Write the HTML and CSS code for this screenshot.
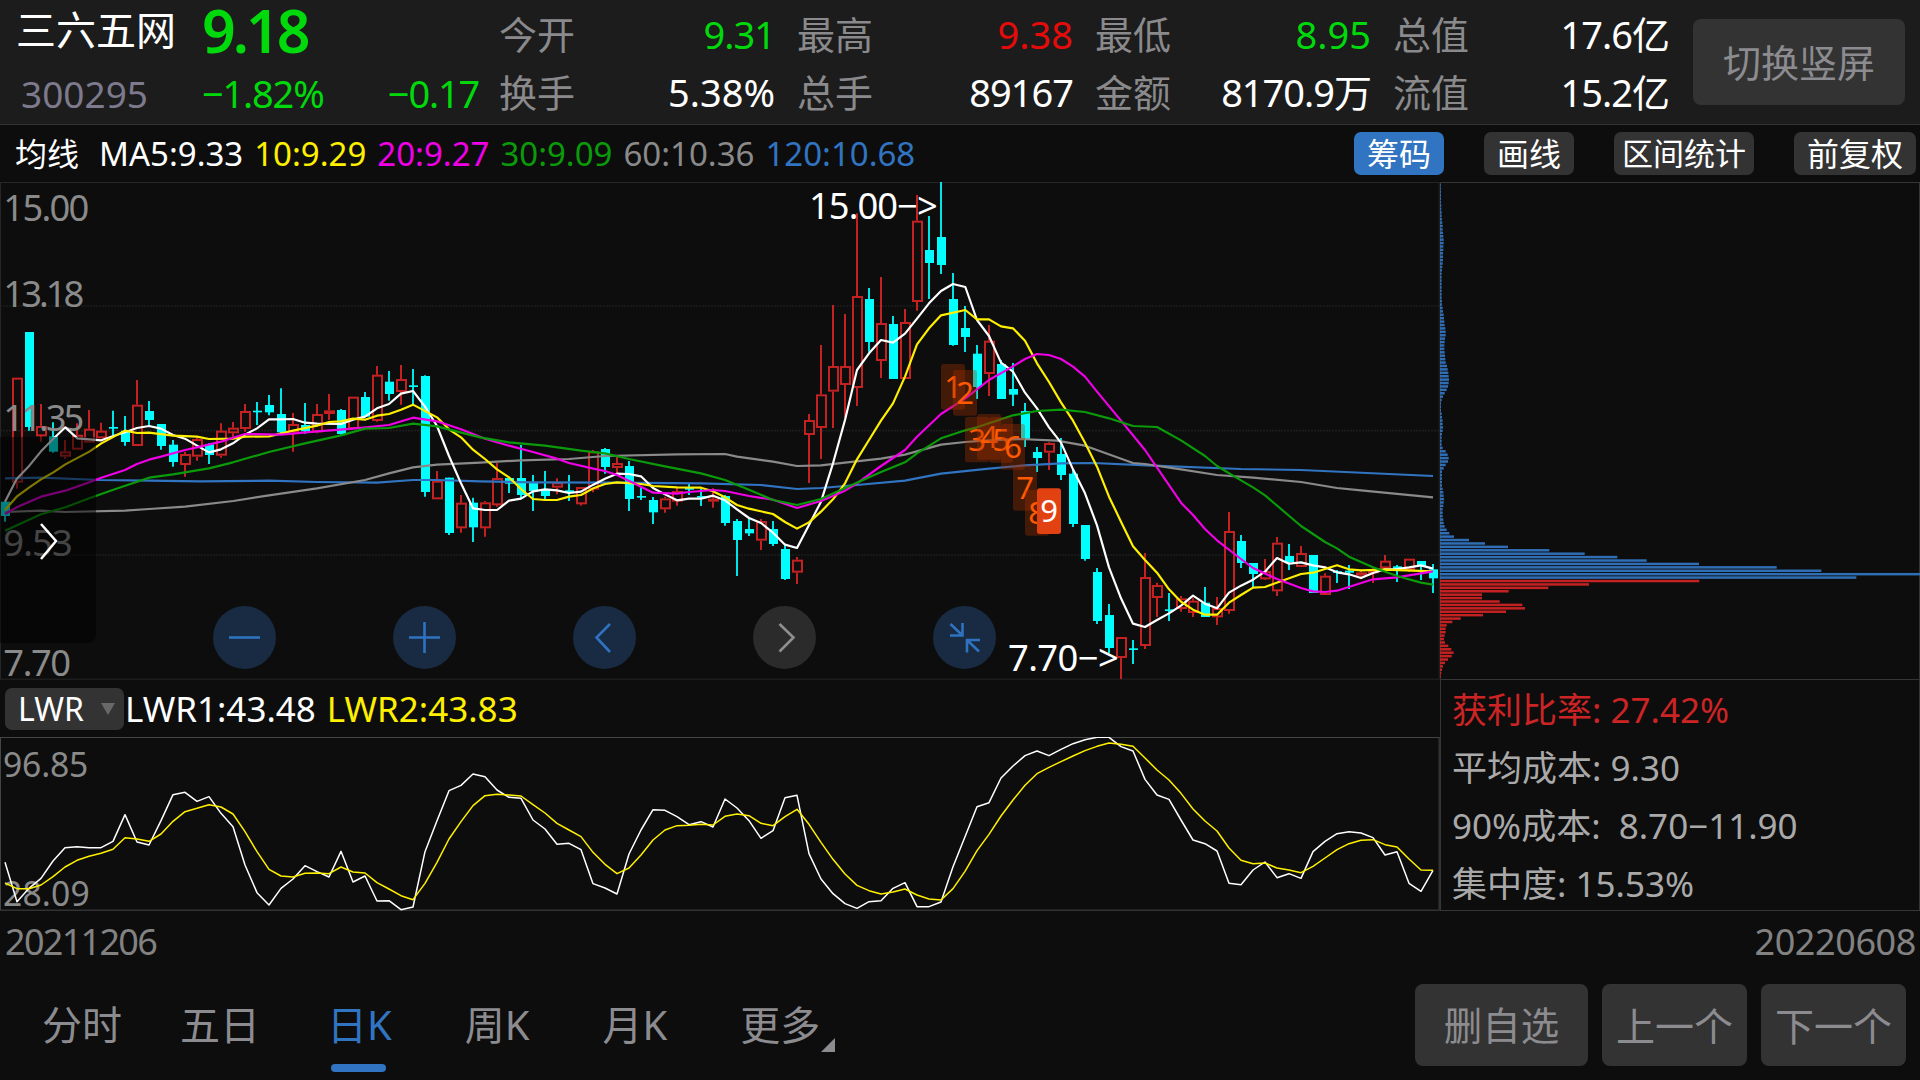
FILE: index.html
```html
<!DOCTYPE html>
<html lang="zh-CN">
<head>
    <meta charset="UTF-8">
    <meta name="viewport" content="width=device-width, initial-scale=1.0">
    <title>三六五网 300295</title>
    <link rel="stylesheet" href="styles.css">
</head>
<body>
    <header class="header">
        <div class="quote">
            <div class="stock-name">三六五网</div>
            <div class="price down">9.18</div>
            <div class="stock-code">300295</div>
            <div class="change down"><span>−1.82%</span><span>−0.17</span></div>
        </div>
        <div class="stats">
            <div class="stat"><span class="label">今开</span><span class="down narrow">9.31</span></div>
            <div class="stat"><span class="label">最高</span><span class="up">9.38</span></div>
            <div class="stat"><span class="label">最低</span><span class="down">8.95</span></div>
            <div class="stat"><span class="label">总值</span><span class="narrow">17.6亿</span></div>
            <div class="stat"><span class="label">换手</span><span>5.38%</span></div>
            <div class="stat"><span class="label">总手</span><span class="narrow">89167</span></div>
            <div class="stat"><span class="label">金额</span><span class="narrow">8170.9万</span></div>
            <div class="stat"><span class="label">流值</span><span class="narrow">15.2亿</span></div>
        </div>
        <button class="button rotate-button">切换竖屏</button>
    </header>

    <div class="ma-bar">
        <div class="ma-list">
            <span class="ma-title">均线</span>
            <span class="ma5">MA5:9.33</span>
            <span class="ma10">10:9.29</span>
            <span class="ma20">20:9.27</span>
            <span class="ma30">30:9.09</span>
            <span class="ma60">60:10.36</span>
            <span class="ma120">120:10.68</span>
        </div>
        <div class="tools">
            <button class="tool active">筹码</button>
            <button class="tool">画线</button>
            <button class="tool wide">区间统计</button>
            <button class="tool">前复权</button>
        </div>
    </div>

    <main class="main">
        <div class="left">
            <div class="chart">
                <svg id="price-chart" width="1440" height="498" viewBox="0 6 4320 1494">
                    <g class="grid">
                        <path d="M0 378H4317M0 752H4317M0 1125H4317"/>
                    </g>
                    <rect class="frame" x="1.5" y="7.5" width="4316" height="1490"/>
                    <g id="candles"></g>
                    <g class="axis">
                        <text x="10" y="122" textLength="258">15.00</text>
                        <text x="10" y="380" textLength="243">13.18</text>
                        <text x="10" y="752" textLength="243">11.35</text>
                        <text x="10" y="1127" textLength="208">9.53</text>
                        <text x="10" y="1487" textLength="203">7.70</text>
                    </g>
                    <g id="averages"></g>
                    <g id="counts"></g>
                    <g class="mark">
                        <text x="2427" y="116" textLength="386">15.00−&gt;</text>
                        <text x="3024" y="1472" textLength="332">7.70−&gt;</text>
                    </g>
                </svg>
                <div class="drawer">
                    <svg width="96" height="206"><path d="M41 87L56 104L41 122"/></svg>
                </div>
                <div class="controls">
                    <button class="round"><svg width="63" height="63"><path d="M16 31.5H47"/></svg></button>
                    <button class="round"><svg width="63" height="63"><path d="M16 31.5H47M31.5 16V47"/></svg></button>
                    <button class="round"><svg width="63" height="63"><path d="M37 18L23.5 31.5L37 46"/></svg></button>
                    <button class="round disabled"><svg width="63" height="63"><path d="M26.5 18L40.5 31.5L26.5 45.5"/></svg></button>
                    <button class="round"><svg width="63" height="63"><path d="M17.5 18L29 29M29.5 17V29.5H17M47 34H34V46.5M34.5 34.5L46 45.5"/></svg></button>
                </div>
            </div>
            <div class="lwr-bar">
                <button class="lwr-select">LWR<i class="caret"></i></button>
                <span>LWR1:43.48</span>
                <span class="ma10">LWR2:43.83</span>
            </div>
            <svg id="lwr-chart" width="1440" height="174" viewBox="0 171 4320 522">
                <rect class="frame" x="1.5" y="172.5" width="4316" height="518"/>
                <g class="axis small">
                    <text x="9" y="291" textLength="256">96.85</text>
                    <text x="9" y="678" textLength="260">28.09</text>
                </g>
                <g id="lwr-lines"></g>
            </svg>
        </div>
        <div class="right">
            <svg id="chips" width="480" height="498" viewBox="0 6 1440 1494">
                <rect class="frame" x="1.5" y="7.5" width="1437" height="1491"/>
            </svg>
            <div class="info">
                <p class="profit">获利比率: 27.42%</p>
                <p>平均成本: 9.30</p>
                <p>90%成本:&nbsp; 8.70−11.90</p>
                <p>集中度: 15.53%</p>
            </div>
        </div>
    </main>

    <div class="dates">
        <span class="date-from">20211206</span>
        <span class="date-to">20220608</span>
    </div>

    <footer class="footer">
        <nav class="tabs">
            <a class="tab">分时</a>
            <a class="tab">五日</a>
            <a class="tab active">日K</a>
            <a class="tab">周K</a>
            <a class="tab">月K</a>
            <a class="tab more">更多</a>
        </nav>
        <div class="actions">
            <button class="button remove">删自选</button>
            <button class="button">上一个</button>
            <button class="button">下一个</button>
        </div>
    </footer>

    <script src="chart.js"></script>
</body>
</html>
```

FILE: styles.css
```css
* {
    box-sizing: border-box;
}
body {
    margin: 0;
    width: 1920px;
    height: 1080px;
    overflow: hidden;
    background-color: #0d0d0d;
    color: #fff;
    font-family: "Noto Sans", "Noto Sans CJK SC", sans-serif;
}
button {
    font-family: inherit;
    border: none;
    padding: 0;
    color: inherit;
    white-space: nowrap;
}
svg {
    display: block;
}
.up {
    color: #e60b0b;
}
.down {
    color: #00d90b;
}
.button {
    background-color: #333;
    color: #8c8c90;
    border-radius: 8px;
    font-size: 39px;
    line-height: 1;
}

/* header */
.header {
    display: flex;
    height: 125px;
    background-color: #1c1c1c;
    border-bottom: 1px solid #333;
}
.quote {
    display: grid;
    grid-template-columns: 186px 277px;
    grid-template-rows: 62px 60px;
    width: 499px;
    padding-left: 16px;
    line-height: 60px;
}
.stock-name {
    font-size: 40px;
}
.price {
    font-size: 59px;
    font-weight: 600;
    letter-spacing: -3px;
}
.stock-code {
    padding-left: 5px;
    font-size: 37px;
    color: #7c7a8c;
    line-height: 64px;
}
.change {
    display: flex;
    justify-content: space-between;
    font-size: 38px;
    letter-spacing: -1.2px;
    line-height: 62px;
}
.stats {
    display: grid;
    grid-template-columns: repeat(4, 276px);
    grid-template-rows: 58px 58px;
    column-gap: 22px;
    padding-top: 5px;
    font-size: 38px;
}
.stat {
    display: flex;
    justify-content: space-between;
    line-height: 58px;
}
.label {
    color: #8a8a8c;
}
.narrow {
    letter-spacing: -1px;
}
.rotate-button {
    width: 212px;
    height: 86px;
    margin: 19px 0 0 24px;
    font-size: 38px;
}

/* averages row */
.ma-bar {
    display: flex;
    justify-content: space-between;
    height: 57px;
    padding: 7px 4px 0 15px;
}
.ma-list {
    display: flex;
    gap: 11px;
    font-size: 33px;
    line-height: 44px;
}
.ma-title {
    font-size: 32px;
    margin-right: 9px;
}
.ma5 { color: #fff; }
.ma10 { color: #fff000; }
.ma20 { color: #f000e6; }
.ma30 { color: #0a9a0a; }
.ma60 { color: #8a8a8a; }
.ma120 { color: #3174c1; }
.tools {
    display: flex;
    gap: 40px;
}
.tool {
    height: 43px;
    padding: 0 13px;
    background-color: #333;
    border-radius: 7px;
    font-size: 32px;
    line-height: 43px;
}
.tool.wide {
    padding: 0 8px;
    font-size: 31px;
}
.tool.active {
    background-color: #3174c1;
}

/* charts */
.main {
    display: grid;
    grid-template-columns: 1440px 480px;
    height: 729px;
}
.chart {
    position: relative;
}
.frame {
    fill: none;
    stroke: #262626;
    stroke-width: 3;
}
#lwr-chart .frame {
    stroke: #454545;
}
#chips .frame {
    stroke: #363636;
}
.grid path {
    stroke: #1d1d1d;
    stroke-width: 5;
    stroke-dasharray: 6 3;
}
.axis text {
    fill: #8a8a8a;
    font-size: 109px;
}
.axis.small text {
    font-size: 101px;
}
.mark text {
    fill: #fff;
    font-size: 109px;
}
.rise {
    fill: none;
    stroke: #c42222;
    stroke-width: 6;
}
.fall {
    fill: #00ffff;
    stroke: none;
}
.wick-fall {
    stroke: #00e5e8;
    stroke-width: 6;
}
.line {
    fill: none;
    stroke: currentColor;
    stroke-width: 6.5;
    stroke-linejoin: round;
}
.line.thin {
    stroke-width: 4.5;
}
.count rect {
    fill: #a83200;
    fill-opacity: 0.35;
}
.count text {
    fill: #ff5a00;
    font-size: 93px;
    text-anchor: middle;
}
.count.last rect {
    fill: #e24212;
    fill-opacity: 1;
}
.count.last text {
    fill: #fff;
}
.chip-up {
    fill: #2f6db5;
}
.chip-down {
    fill: #c42222;
}
.drawer {
    position: absolute;
    left: 0;
    top: 255px;
    width: 96px;
    height: 206px;
    background-color: rgba(0, 0, 0, 0.5);
    border-radius: 0 0 8px 0;
}
.drawer path {
    fill: none;
    stroke: #fff;
    stroke-width: 2.5;
}
.controls {
    position: absolute;
    left: 213px;
    top: 424px;
    display: flex;
    gap: 117px;
}
.round {
    width: 63px;
    height: 63px;
    border-radius: 50%;
    background-color: #182b42;
}
.round path {
    fill: none;
    stroke: #2f73c0;
    stroke-width: 2.6;
}
.round.disabled {
    background-color: #2b2b2b;
}
.round.disabled path {
    stroke: #8f8f8f;
}
.lwr-bar {
    display: flex;
    align-items: center;
    height: 57px;
    padding-left: 5px;
    font-size: 35px;
}
.lwr-bar span {
    margin-right: 11px;
}
.lwr-select {
    display: flex;
    align-items: center;
    justify-content: space-between;
    width: 119px;
    height: 42px;
    margin-right: 1px;
    padding: 0 9px 0 13px;
    background-color: #333;
    border-radius: 7px;
    font-size: 32px;
}
.caret {
    border: 7px solid transparent;
    border-top: 12px solid #686868;
    border-bottom: none;
}
.info {
    height: 231px;
    padding-left: 11px;
    border: 1px solid #363636;
    border-top: none;
    font-size: 35px;
    color: #a9a9a9;
}
.info p {
    margin: 0;
    height: 58px;
    line-height: 60px;
    white-space: pre;
}
.info .profit {
    color: #cc2424;
}

/* bottom */
.dates {
    display: flex;
    justify-content: space-between;
    height: 62px;
    padding: 0 4px 0 5px;
    font-size: 36px;
    line-height: 62px;
    color: #828282;
}
.date-from {
    letter-spacing: -1.7px;
}
.date-to {
    letter-spacing: -0.4px;
}
.footer {
    display: flex;
    justify-content: space-between;
    height: 107px;
    padding: 11px 14px 0 42px;
}
.tabs {
    display: flex;
    font-size: 40px;
    line-height: 82px;
    color: #8c8c90;
}
.tab {
    position: relative;
    margin-right: 58px;
    height: 82px;
}
.tab:nth-child(3),
.tab:nth-child(4),
.tab:nth-child(5) {
    margin-right: 73px;
}
.tab.active {
    margin-left: 9px;
    color: #3174c1;
}
.tab.active::after {
    content: "";
    position: absolute;
    left: 4px;
    top: 80px;
    width: 55px;
    height: 8px;
    border-radius: 4px;
    background-color: #3174c1;
}
.tab.more::after {
    content: "";
    position: absolute;
    right: -15px;
    top: 54px;
    border-left: 14px solid transparent;
    border-bottom: 14px solid #8c8c90;
}
.actions {
    display: flex;
    gap: 14px;
}
.actions .button {
    width: 145px;
    height: 82px;
}
.actions .remove {
    width: 173px;
    font-size: 38.5px;
}
```

FILE: chart.js
```js
const NS = "http://www.w3.org/2000/svg";

// Chart units are thirds of a pixel, one bar every 36 units
const STEP = 36;
const FIRST = 15;

// 1 = rise, 0 = fall, then high, body top, body bottom, low
const candles = [
    [0,965,965,1008,1025],[1,593,593,908,926],[0,456,456,741,752],[1,672,738,769,785],[0,727,770,815,818],
    [1,780,814,830,836],[1,730,764,809,809],[1,690,746,788,788],[1,728,752,775,775],[0,692,741,744,765],
    [0,708,752,786,797],[1,600,674,798,798],[0,663,693,720,738],[0,732,732,798,809],[0,780,794,846,860],
    [1,815,822,855,890],[1,768,777,830,842],[0,790,793,825,852],[1,730,752,827,833],[1,726,743,760,773],
    [1,672,693,747,755],[0,666,692,696,735],[0,645,675,697,706],[0,625,702,757,762],[1,699,732,757,815],
    [0,669,735,754,761],[1,672,702,757,760],[1,642,691,702,720],[0,687,690,762,764],[1,650,650,747,747],
    [0,636,651,710,712],[1,558,584,723,725],[0,573,605,642,662],[1,555,597,636,674],[0,567,616,620,672],
    [0,586,588,936,950],[1,873,902,958,958],[0,893,893,1059,1065],[1,945,968,1045,1058],[0,953,968,1042,1086],
    [1,963,967,1045,1070],[1,849,894,976,980],[0,894,894,911,939],[0,795,894,945,954],[0,885,908,933,993],
    [0,873,928,948,957],[1,895,907,923,943],[0,885,931,935,963],[1,921,921,973,977],[1,810,814,929,937],
    [0,804,807,861,881],[1,831,849,864,882],[0,843,858,957,993],[0,922,948,952,960],[0,951,960,997,1032],
    [1,950,955,988,998],[1,924,933,965,977],[0,912,923,929,945],[0,926,948,952,978],[1,925,956,965,983],
    [0,945,948,1029,1037],[0,1017,1023,1080,1188],[0,1014,1047,1060,1068],[1,1017,1023,1082,1110],[0,1023,1047,1092,1098],
    [0,1092,1107,1197,1200],[1,1131,1139,1178,1212],[1,702,720,765,909],[1,495,643,744,837],[1,375,558,635,744],
    [1,402,558,615,712],[1,100,348,624,678],[0,324,357,486,515],[1,291,429,543,594],[0,408,432,597,597],
    [1,387,426,597,597],[1,45,122,366,392],[0,108,210,249,357],[0,6,171,255,282],[0,279,357,495,497],
    [0,378,444,471,516],[0,495,521,621,657],[1,435,482,582,648],[0,540,552,657,657],[0,549,627,644,678],
    [0,669,693,777,801],[0,801,816,834,876],[1,787,789,818,870],[0,774,822,885,900],[0,870,881,1032,1041],
    [0,1035,1035,1137,1142],[0,1164,1176,1323,1332],[0,1272,1305,1404,1420],[1,1371,1371,1434,1497],[0,1380,1405,1409,1452],
    [1,1119,1191,1398,1407],[1,1208,1215,1254,1311],[0,1239,1288,1292,1323],[1,1248,1255,1287,1295],[1,1255,1262,1299,1311],
    [0,1221,1268,1311,1311],[1,1251,1284,1312,1335],[1,996,1053,1293,1301],[0,1065,1083,1149,1164],[0,1149,1149,1182,1224],
    [1,1137,1173,1198,1200],[1,1071,1088,1234,1248],[0,1092,1128,1146,1170],[1,1098,1119,1161,1161],[0,1125,1125,1239,1239],
    [1,1180,1187,1245,1245],[0,1170,1174,1177,1209],[0,1155,1172,1178,1227],[1,1173,1177,1187,1198],[1,1165,1168,1180,1209],
    [1,1125,1142,1165,1175],[0,1155,1159,1167,1206],[1,1136,1136,1170,1176],[0,1143,1143,1158,1200],[0,1152,1168,1195,1239]
];

const averages = {
    ma120: "15,895 123,893 300,900 447,902 600,904 807,902 951,906 1131,908 1239,900 1311,900 1440,904 1599,907 1851,908 2103,910 2283,915 2391,927 2463,924 2571,915 2715,902 2823,881 2967,866 3075,856 3183,850 3280,849 3440,856 3723,867 3903,870 4299,888",
    ma60: "15,996 123,992 195,996 375,992 447,987 555,980 700,963 807,946 951,925 1095,900 1167,880 1239,862 1311,854 1440,848 1563,841 1707,837 1815,828 2031,823 2175,822 2211,830 2319,845 2391,858 2463,856 2535,848 2643,836 2715,824 2823,794 2896,786 2967,781 3060,777 3171,782 3255,797 3399,849 3435,852 3543,868 3651,885 3759,893 3903,906 4011,924 4083,931 4299,952",
    ma5: "15,965 50,897 88,857 123,814 160,776 196,742 232,775 268,778 304,781 340,768 375,757 411,744 447,738 483,746 519,765 555,776 591,797 627,817 663,808 699,790 735,764 771,745 807,718 843,718 879,717 915,728 951,731 1023,732 1059,719 1095,710 1131,685 1167,672 1203,641 1239,633 1275,680 1311,738 1347,828 1383,910 1419,985 1455,990 1491,990 1527,962 1563,956 1599,934 1635,928 1671,931 1707,939 1743,935 1780,914 1815,896 1851,881 1887,882 1923,889 1959,924 1995,943 2031,961 2067,956 2103,956 2139,947 2175,961 2211,988 2247,1014 2283,1029 2319,1058 2355,1094 2391,1104 2427,1035 2463,965 2499,850 2535,720 2571,570 2607,520 2643,480 2679,488 2715,461 2751,416 2787,370 2823,333 2859,312 2896,321 2931,420 2967,468 3003,548 3039,575 3075,638 3111,685 3147,742 3183,788 3219,868 3255,940 3291,1036 3327,1162 3363,1255 3399,1331 3435,1341 3471,1320 3507,1300 3543,1277 3579,1247 3615,1271 3651,1285 3687,1238 3723,1217 3759,1199 3795,1175 3831,1134 3867,1151 3903,1147 3939,1156 3975,1162 4011,1177 4047,1183 4083,1194 4119,1179 4155,1168 4191,1167 4227,1162 4263,1156 4299,1166",
    ma10: "15,990 50,950 88,922 123,898 160,877 196,853 268,815 304,790 375,752 411,759 447,758 519,767 591,770 627,777 699,776 735,770 807,769 879,752 951,737 987,726 1023,724 1059,716 1095,719 1131,707 1167,702 1203,689 1239,674 1311,712 1347,748 1383,772 1419,809 1455,837 1491,868 1527,892 1563,927 1599,957 1635,960 1671,960 1707,950 1743,945 1780,925 1815,912 1851,907 1923,912 1959,918 2031,922 2103,923 2139,934 2175,952 2211,975 2247,986 2319,1002 2355,1026 2391,1046 2427,1027 2463,995 2499,958 2535,910 2571,838 2607,780 2643,722 2679,670 2715,590 2751,493 2787,445 2823,406 2896,390 2931,418 2967,418 3003,439 3039,445 3075,482 3111,550 3147,606 3183,667 3219,722 3255,788 3291,860 3327,950 3363,1025 3399,1099 3435,1140 3471,1178 3507,1228 3543,1265 3579,1289 3615,1304 3651,1304 3687,1268 3723,1245 3759,1223 3795,1221 3903,1182 3939,1178 4011,1156 4047,1168 4083,1171 4155,1169 4299,1174",
    ma20: "15,1002 50,982 123,950 196,932 268,907 304,893 375,870 411,852 447,839 483,830 555,810 591,802 663,785 699,773 735,762 843,764 951,754 1059,746 1167,735 1239,713 1311,724 1383,748 1455,776 1527,797 1599,816 1671,836 1707,849 1780,866 1815,873 1851,885 1923,920 1959,938 2031,941 2067,936 2139,930 2175,933 2247,948 2319,959 2391,984 2463,963 2535,932 2571,910 2643,858 2715,810 2751,770 2823,702 2896,655 2967,600 3039,559 3075,537 3111,522 3147,525 3183,537 3219,560 3255,590 3291,635 3363,722 3435,810 3543,968 3579,1005 3615,1047 3651,1081 3723,1137 3759,1164 3831,1197 3903,1224 3939,1234 3975,1236 4011,1232 4119,1198 4191,1192 4299,1174",
    ma30: "15,1052 123,1003 196,982 268,955 340,929 447,893 519,883 627,865 699,847 807,816 915,790 1023,766 1095,746 1167,744 1239,731 1311,739 1440,772 1527,787 1635,797 1743,812 1815,820 1887,837 1995,859 2103,880 2175,900 2247,929 2319,960 2391,975 2463,957 2535,924 2643,876 2715,847 2751,820 2823,775 2896,751 2931,742 2967,730 3039,706 3111,693 3183,689 3255,696 3327,715 3399,738 3471,741 3543,781 3615,828 3651,858 3723,901 3759,922 3795,946 3903,1038 3975,1086 4011,1105 4047,1130 4119,1162 4191,1188 4263,1208 4299,1214"
};

// top left corner of each numbered box
const counts = [
    [2823,552],[2859,570],[2895,710],[2931,702],[2967,711],[3003,732],[3039,855],[3075,930],[3111,925]
];

const lwr1 = [
    547,665,625,595,543,503,500,503,503,484,404,486,495,422,344,337,364,350,400,440,
    555,638,675,625,597,557,575,591,514,606,588,663,662,689,681,515,422,332,316,282,
    290,330,352,355,420,447,493,490,509,611,624,642,522,450,389,391,410,434,425,441,
    357,384,422,475,452,353,346,521,597,641,671,685,665,662,625,608,680,680,666,560,
    470,380,368,294,258,227,213,227,208,191,179,172,172,200,213,298,345,358,420,480,
    491,513,610,614,570,546,593,581,595,515,484,461,455,459,473,525,515,610,634,571
];
const lwr2 = [
    609,626,626,615,590,561,541,529,520,508,473,477,484,462,424,395,385,374,381,402,
    455,515,568,588,591,580,579,581,561,576,579,608,627,647,659,610,547,477,425,377,
    347,343,345,348,374,399,430,450,470,517,553,581,564,525,480,450,437,436,433,435,
    409,402,407,430,437,410,388,433,487,538,582,616,632,642,636,627,645,657,660,626,
    574,512,463,408,360,316,281,262,245,228,212,199,189,193,199,234,270,300,340,387,
    423,453,504,541,551,549,564,570,578,559,534,509,491,481,479,494,501,537,570,571
];

// chip widths, listed upwards and downwards from the current price
const chipsUp = [
    1249,1440,1144,1010,777,620,532,434,328,204,135,87,42,28,20,14,11,10,8,8,8,10,11,12,11,10,8,6,6,6,6,6,
    11,17,24,26,23,17,8,5,5,5,6,8,9,8,8,6,5,3,3,3,5,9,14,20,24,26,27,26,25,23,21,17,16,15,14,13,13,14,
    15,17,17,16,14,13,12,11,9,8,6,6,5,5,5,5,5,5,5,5,6,7,8,9,9,9,10,10,11,11,10,9,8,8,7,6,5,5,4,4,3,3,3,
    3,2,2
];
const chipsDown = [
    778,447,325,206,126,126,179,247,255,198,129,62,37,20,17,17,14,12,15,25,34,41,35,24,15,9,6,4,2
];

function add(parent, tag, attrs) {
    const el = document.createElementNS(NS, tag);
    for (const key in attrs) {
        el.setAttribute(key, attrs[key]);
    }
    parent.appendChild(el);
    return el;
}

function drawCandles() {
    const group = document.getElementById("candles");
    candles.forEach(([rise, high, top, bottom, low], i) => {
        const x = FIRST + STEP * i;
        if (rise) {
            const height = Math.max(bottom - top - 6, 1);
            add(group, "path", { class: "rise", d: `M${x} ${high}V${top}M${x} ${bottom}V${low}` });
            add(group, "rect", { class: "rise", x: x - 12, y: top + 3, width: 27, height: height });
        } else {
            add(group, "path", { class: "wick-fall", d: `M${x} ${high}V${low}` });
            add(group, "rect", { class: "fall", x: x - 12, y: top, width: 27, height: Math.max(bottom - top, 5) });
        }
    });
}

function drawAverages() {
    const group = document.getElementById("averages");
    for (const name in averages) {
        add(group, "polyline", { class: "line " + name, points: averages[name] });
    }
}

function drawCounts() {
    const group = document.getElementById("counts");
    counts.forEach(([x, y], i) => {
        const g = add(group, "g", { class: i === 8 ? "count last" : "count" });
        add(g, "rect", { x: x, y: y, width: 72, height: 137, rx: 8 });
        add(g, "text", { x: x + 36, y: y + 102 }).textContent = i + 1;
    });
}

function drawLwr() {
    const group = document.getElementById("lwr-lines");
    const toPoints = (values) => values.map((y, i) => `${FIRST + STEP * i},${y}`).join(" ");
    add(group, "polyline", { class: "line thin ma5", points: toPoints(lwr1) });
    add(group, "polyline", { class: "line thin ma10", points: toPoints(lwr2) });
}

function drawChips() {
    const svg = document.getElementById("chips");
    chipsUp.forEach((w, i) => {
        add(svg, "rect", { class: "chip-up", x: 0, y: 1189 - 10.24 * i, width: w, height: 7.5 });
    });
    chipsDown.forEach((w, i) => {
        add(svg, "rect", { class: "chip-down", x: 0, y: 1199.3 + 10.24 * i, width: w, height: 7.5 });
    });
}

drawCandles();
drawAverages();
drawCounts();
drawLwr();
drawChips();
```
